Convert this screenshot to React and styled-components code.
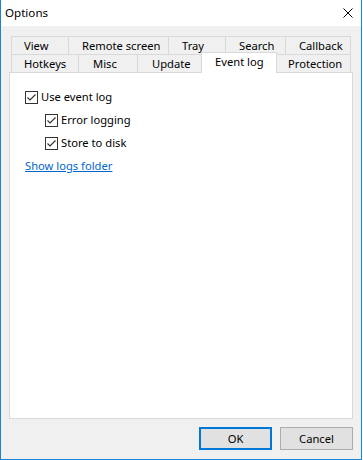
import React from "react";
import styled, { createGlobalStyle } from "styled-components";

const Global = createGlobalStyle`
  html, body { margin: 0; padding: 0; background: #ffffff; }
  body { font-family: "Noto Sans", "Open Sans", Arial, sans-serif; font-size: 11.2px; color: #000; }
`;

const Window = styled.div`
  box-sizing: border-box;
  width: 362px;
  height: 460px;
  border: 1px solid #1883d7;
  border-top: none;
  background: #f0f0f0;
  display: flex;
  flex-direction: column;
`;

const TitleBar = styled.div`
  height: 26px;
  background: #ffffff;
  display: flex;
  align-items: center;
  justify-content: space-between;
  padding: 0 8px 0 4px;
  flex-shrink: 0;
`;

const Title = styled.span`
  font-size: 11.6px;
  line-height: 26px;
  padding-bottom: 1px;
`;

const CloseIcon = styled.svg`
  width: 10px;
  height: 10px;
  margin-top: -1px;
`;

const Body = styled.div`
  flex: 1;
  display: flex;
  flex-direction: column;
  padding: 10px 8px 9px 8px;
`;

const TabRow = styled.div`
  display: flex;
  height: 18px;
  margin: 0 2px;
  align-items: flex-start;
`;

const Tab = styled.div`
  box-sizing: border-box;
  width: ${(p) => p.$w}px;
  height: ${(p) => (p.$active ? 21 : 18)}px;
  margin-top: ${(p) => (p.$active ? -2 : 0)}px;
  border-top: 1px solid #d9d9d9;
  border-left: ${(p) => (p.$noLeft ? "none" : "1px solid #d9d9d9")};
  border-right: ${(p) => (p.$active || p.$last ? "1px solid #d9d9d9" : "none")};
  background: ${(p) => (p.$active ? "#ffffff" : "#f0f0f0")};
  position: ${(p) => (p.$active ? "relative" : "static")};
  z-index: ${(p) => (p.$active ? 1 : "auto")};
  display: flex;
  align-items: center;
  padding-left: ${(p) => p.$pad}px;
  padding-bottom: ${(p) => (p.$active ? 3 : 0)}px;
  white-space: nowrap;
  color: #000;
`;

const Panel = styled.div`
  box-sizing: border-box;
  height: 347px;
  background: #ffffff;
  border: 1px solid #d9d9d9;
  padding: 12px 0 0 15px;
  display: flex;
  flex-direction: column;
`;

const Row = styled.label`
  display: flex;
  align-items: center;
  height: 23px;
  padding-left: ${(p) => (p.$indent ? 20 : 0)}px;
  gap: 3px;
`;

const Box = styled.span`
  box-sizing: border-box;
  width: 13px;
  height: 13px;
  border: 1px solid #333333;
  background: #ffffff;
  display: flex;
  align-items: center;
  justify-content: center;
  flex-shrink: 0;
  margin-top: 1px;
`;

const Link = styled.a`
  display: flex;
  align-items: center;
  height: 23px;
  color: #0066cc;
  text-decoration: underline;
  cursor: pointer;
`;

const Footer = styled.div`
  display: flex;
  justify-content: flex-end;
  gap: 8px;
  margin-top: 8px;
`;

const Button = styled.button`
  box-sizing: border-box;
  width: 73px;
  height: 23px;
  background: #e1e1e1;
  border: ${(p) => (p.$default ? "2px solid #0078d7" : "1px solid #adadad")};
  font-family: inherit;
  font-size: 11.2px;
  color: #000;
  padding: 0;
  display: flex;
  align-items: center;
  justify-content: center;
`;

const row1 = [
  { label: "View", w: 57, pad: 12 },
  { label: "Remote screen", w: 100, pad: 13 },
  { label: "Tray", w: 57, pad: 13 },
  { label: "Search", w: 60, pad: 13 },
  { label: "Callback", w: 66, pad: 13, last: true },
];

const row2 = [
  { label: "Hotkeys", w: 67, pad: 12 },
  { label: "Misc", w: 59, pad: 14 },
  { label: "Update", w: 64, pad: 14 },
  { label: "Event log", w: 76, pad: 13, active: true },
  { label: "Protection", w: 74, pad: 11, last: true, noLeft: true },
];

function Check({ checked }) {
  return (
    <Box>
      {checked && (
        <svg width="11" height="11" viewBox="0 0 11 11">
          <path d="M1.5 5.5 L4 8 L9.5 2.5" fill="none" stroke="#333" strokeWidth="1.2" />
        </svg>
      )}
    </Box>
  );
}

export default function App() {
  return (
    <>
      <Global />
      <Window>
        <TitleBar>
          <Title>Options</Title>
          <CloseIcon viewBox="0 0 10 10">
            <path d="M0.5 0.5 L9.5 9.5 M9.5 0.5 L0.5 9.5" stroke="#000" strokeWidth="1" fill="none" />
          </CloseIcon>
        </TitleBar>
        <Body>
          <TabRow>
            {row1.map((t) => (
              <Tab key={t.label} $w={t.w} $pad={t.pad} $last={t.last}>
                {t.label}
              </Tab>
            ))}
          </TabRow>
          <TabRow>
            {row2.map((t) => (
              <Tab key={t.label} $w={t.w} $pad={t.pad} $last={t.last} $active={t.active} $noLeft={t.noLeft}>
                {t.label}
              </Tab>
            ))}
          </TabRow>
          <Panel>
            <Row>
              <Check checked />
              Use event log
            </Row>
            <Row $indent>
              <Check checked />
              Error logging
            </Row>
            <Row $indent>
              <Check checked />
              Store to disk
            </Row>
            <Link>Show logs folder</Link>
          </Panel>
          <Footer>
            <Button $default>OK</Button>
            <Button>Cancel</Button>
          </Footer>
        </Body>
      </Window>
    </>
  );
}
